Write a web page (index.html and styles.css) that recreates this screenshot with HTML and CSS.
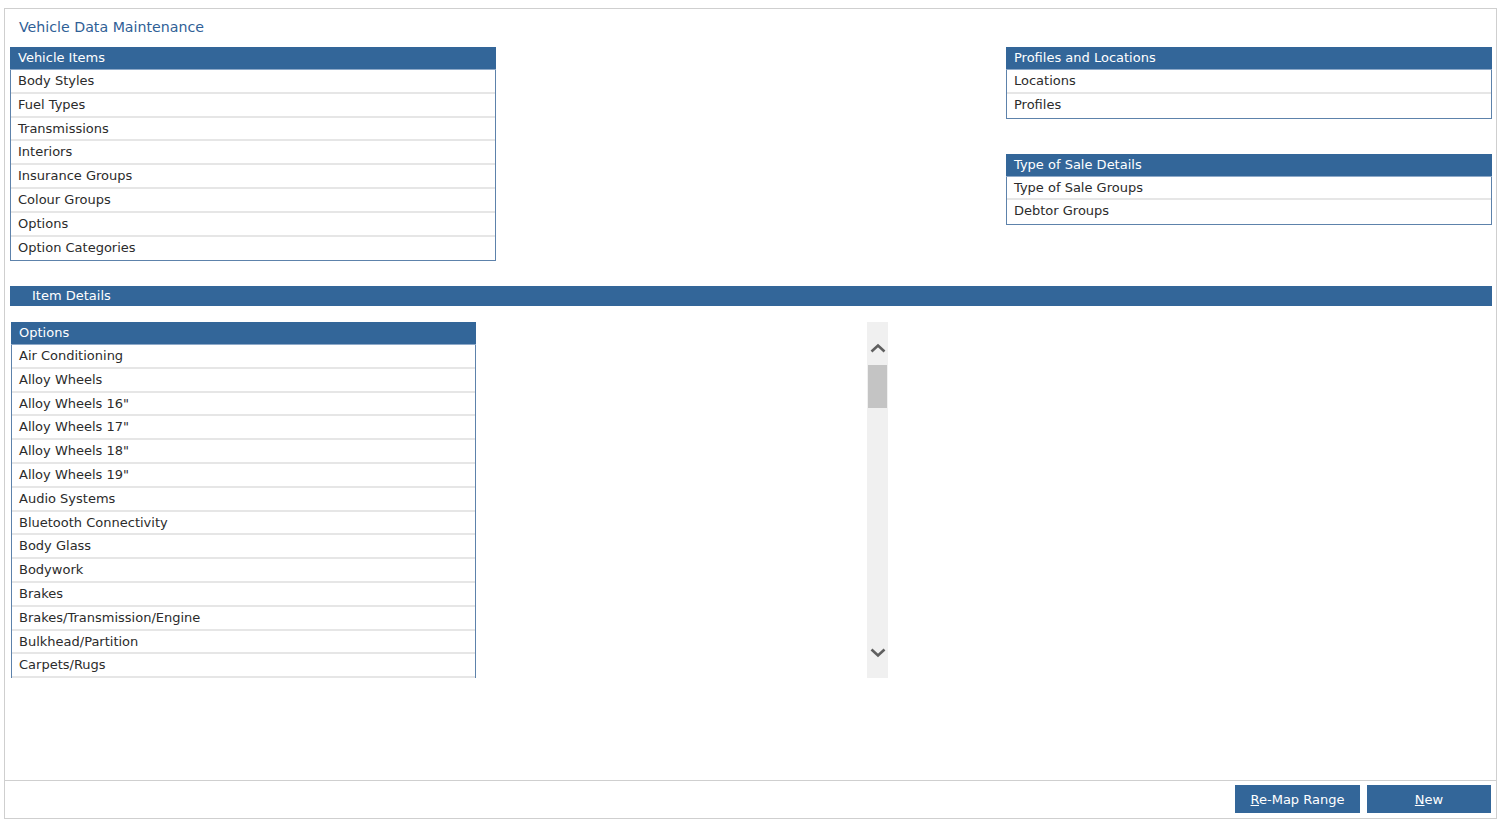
FILE: index.html
```html
<!DOCTYPE html>
<html lang="en">
<head>
    <meta charset="UTF-8">
    <meta name="viewport" content="width=device-width, initial-scale=1.0">
    <title>Vehicle Data Maintenance</title>
    <link rel="stylesheet" href="styles.css">
</head>
<body>
    <div class="frame">
        <div class="content">
            <div class="page-title">Vehicle Data Maintenance</div>

            <div class="top-section">
                <div class="panel wide">
                    <div class="panel-header">Vehicle Items</div>
                    <ul class="panel-list">
                        <li>Body Styles</li>
                        <li>Fuel Types</li>
                        <li>Transmissions</li>
                        <li>Interiors</li>
                        <li>Insurance Groups</li>
                        <li>Colour Groups</li>
                        <li>Options</li>
                        <li class="last">Option Categories</li>
                    </ul>
                </div>

                <div class="side-column">
                    <div class="panel wide">
                        <div class="panel-header">Profiles and Locations</div>
                        <ul class="panel-list">
                            <li>Locations</li>
                            <li class="last">Profiles</li>
                        </ul>
                    </div>
                    <div class="panel wide">
                        <div class="panel-header">Type of Sale Details</div>
                        <ul class="panel-list">
                            <li>Type of Sale Groups</li>
                            <li class="last">Debtor Groups</li>
                        </ul>
                    </div>
                </div>
            </div>

            <div class="section-bar">Item Details</div>

            <div class="detail-section">
                <div class="detail-scroll">
                    <div class="panel narrow open">
                        <div class="panel-header">Options</div>
                        <ul class="panel-list">
                            <li>Air Conditioning</li>
                            <li>Alloy Wheels</li>
                            <li>Alloy Wheels 16"</li>
                            <li>Alloy Wheels 17"</li>
                            <li>Alloy Wheels 18"</li>
                            <li>Alloy Wheels 19"</li>
                            <li>Audio Systems</li>
                            <li>Bluetooth Connectivity</li>
                            <li>Body Glass</li>
                            <li>Bodywork</li>
                            <li>Brakes</li>
                            <li>Brakes/Transmission/Engine</li>
                            <li>Bulkhead/Partition</li>
                            <li>Carpets/Rugs</li>
                        </ul>
                    </div>
                </div>
                <div class="scrollbar">
                    <svg class="arrow" width="20" height="14" viewBox="0 0 20 14">
                        <path d="M3.5 10.5 L10 4.5 L16.5 10.5" fill="none" stroke="#5f5f5f" stroke-width="2.6"/>
                    </svg>
                    <div class="thumb"></div>
                    <div class="track"></div>
                    <svg class="arrow" width="20" height="14" viewBox="0 0 20 14">
                        <path d="M3.5 3.5 L10 9.5 L16.5 3.5" fill="none" stroke="#5f5f5f" stroke-width="2.6"/>
                    </svg>
                </div>
            </div>
        </div>

        <div class="footer">
            <button class="action-btn remap"><u>R</u>e-Map Range</button>
            <button class="action-btn"><u>N</u>ew</button>
        </div>
    </div>
</body>
</html>
```

FILE: styles.css
```css
* {
    margin: 0;
    padding: 0;
    box-sizing: border-box;
}

body {
    font-family: "DejaVu Sans", Tahoma, sans-serif;
    font-size: 13px;
    background-color: #fff;
    color: #2b2b2b;
    overflow: hidden;
}

.frame {
    margin: 8px 0 0 4px;
    width: 1493px;
    height: 811px;
    border: 1px solid #cfcfcf;
    display: flex;
    flex-direction: column;
}

.content {
    flex: 1;
    padding: 0 4px 0 5px;
}

.page-title {
    height: 38px;
    line-height: 36px;
    padding-left: 9px;
    font-size: 14.2px;
    color: #2f6096;
}

/* Top panels */
.top-section {
    display: flex;
    justify-content: space-between;
    height: 239px;
}

.side-column {
    display: flex;
    flex-direction: column;
    gap: 35px;
}

.panel {
    border: 1px solid #5d82ab;
    border-top: none;
    background-color: #fff;
}

.panel.wide {
    width: 486px;
    align-self: flex-start;
}

.panel.narrow {
    width: 465px;
}

.panel.open {
    border-bottom: none;
}

.panel-header {
    height: 23px;
    line-height: 21px;
    background-color: #336699;
    border-bottom: 1px solid #8ea9c8;
    color: #fff;
    margin: 0 -1px;
    padding-left: 8px;
}

.panel-list {
    list-style: none;
}

.panel-list li {
    height: 23.8px;
    line-height: 22px;
    padding-left: 7px;
    border-bottom: 2px solid #e6e6e6;
    white-space: nowrap;
}

.panel-list li.last {
    border-bottom: none;
}

/* Item details */
.section-bar {
    height: 20px;
    line-height: 20px;
    padding-left: 22px;
    background-color: #336699;
    color: #fff;
}

.detail-section {
    display: flex;
    height: 356px;
    margin-top: 16px;
    padding-left: 1px;
}

.detail-scroll {
    width: 856px;
    height: 100%;
    overflow: hidden;
}

.scrollbar {
    width: 21px;
    height: 100%;
    background-color: #f0f0f0;
    display: flex;
    flex-direction: column;
    align-items: center;
}

.scrollbar .arrow {
    flex: none;
    margin: 19px 0 10px;
}

.scrollbar .arrow:last-child {
    margin: 0 0 18px;
}

.thumb {
    width: 19px;
    height: 43px;
    background-color: #c4c4c4;
}

.track {
    flex: 1;
}

/* Footer */
.footer {
    height: 38px;
    border-top: 1px solid #cfcfcf;
    display: flex;
    justify-content: flex-end;
    align-items: flex-start;
    gap: 7px;
    padding: 4px 5px 0 0;
}

.action-btn {
    width: 124px;
    height: 28px;
    background-color: #336699;
    border: none;
    color: #fff;
    font-family: "DejaVu Sans", Tahoma, sans-serif;
    font-size: 13px;
    cursor: pointer;
}

.action-btn.remap {
    width: 125px;
}

.action-btn:hover {
    background-color: #2a5580;
}
```
